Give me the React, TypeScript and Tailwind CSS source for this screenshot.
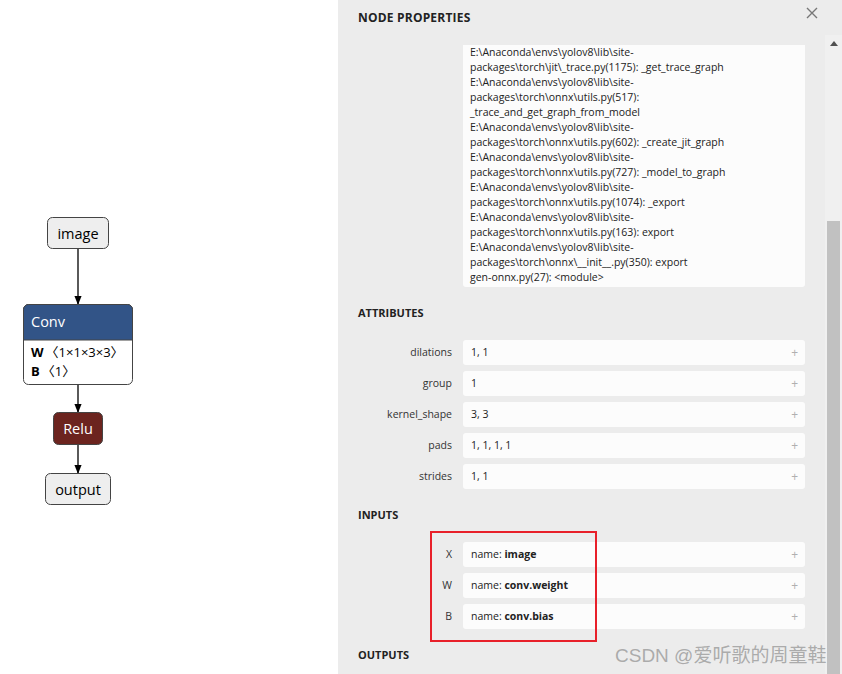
import React from "react";

const traceLines = [
  "E:\\Anaconda\\envs\\yolov8\\lib\\site-",
  "packages\\torch\\jit\\_trace.py(1175): _get_trace_graph",
  "E:\\Anaconda\\envs\\yolov8\\lib\\site-",
  "packages\\torch\\onnx\\utils.py(517):",
  "_trace_and_get_graph_from_model",
  "E:\\Anaconda\\envs\\yolov8\\lib\\site-",
  "packages\\torch\\onnx\\utils.py(602): _create_jit_graph",
  "E:\\Anaconda\\envs\\yolov8\\lib\\site-",
  "packages\\torch\\onnx\\utils.py(727): _model_to_graph",
  "E:\\Anaconda\\envs\\yolov8\\lib\\site-",
  "packages\\torch\\onnx\\utils.py(1074): _export",
  "E:\\Anaconda\\envs\\yolov8\\lib\\site-",
  "packages\\torch\\onnx\\utils.py(163): export",
  "E:\\Anaconda\\envs\\yolov8\\lib\\site-",
  "packages\\torch\\onnx\\__init__.py(350): export",
  "gen-onnx.py(27): <module>",
];

const attributes = [
  { name: "dilations", value: "1, 1" },
  { name: "group", value: "1" },
  { name: "kernel_shape", value: "3, 3" },
  { name: "pads", value: "1, 1, 1, 1" },
  { name: "strides", value: "1, 1" },
];

const inputs = [
  { name: "X", value: "image" },
  { name: "W", value: "conv.weight" },
  { name: "B", value: "conv.bias" },
];

function Graph() {
  return (
    <svg width="338" height="674" viewBox="0 0 338 674" className="block">
      <defs>
        <marker id="arrow" viewBox="0 0 10 10" refX="9" refY="5" markerWidth="7" markerHeight="7" orient="auto">
          <path d="M0,1 L10,5 L0,9 z" fill="#000" />
        </marker>
      </defs>
      <g stroke="#000" strokeWidth="1.3" markerEnd="url(#arrow)">
        <line x1="78" y1="249" x2="78" y2="304" />
        <line x1="78" y1="385" x2="78" y2="412" />
        <line x1="78" y1="445" x2="78" y2="473" />
      </g>
      <g fontFamily="'Open Sans', 'Noto Sans', 'Noto Sans CJK SC', sans-serif" fontSize="14.5">
        <rect x="47.5" y="217.5" width="61" height="31" rx="5" fill="#eeeeee" stroke="#444" />
        <text x="78" y="239" textAnchor="middle" fill="#000">image</text>

        <rect x="23.5" y="304.5" width="109" height="80" rx="5" fill="#fff" stroke="#444" />
        <path d="M23.5,340 V309.5 a5,5 0 0 1 5,-5 H127.5 a5,5 0 0 1 5,5 V340 z" fill="#325487" stroke="#444" />
        <text x="31" y="327" fill="#fff">Conv</text>
        <text x="31" y="357" fontSize="13" fill="#000">
          <tspan fontWeight="bold">W</tspan>
          <tspan dx="2">〈1×1×3×3〉</tspan>
        </text>
        <text x="31" y="376" fontSize="13" fill="#000">
          <tspan fontWeight="bold">B</tspan>
          <tspan dx="2">〈1〉</tspan>
        </text>

        <rect x="53.5" y="412.5" width="49" height="32" rx="5" fill="#6c241f" stroke="#444" />
        <text x="78" y="434" textAnchor="middle" fill="#fff">Relu</text>

        <rect x="45.5" y="473.5" width="65" height="31" rx="5" fill="#eeeeee" stroke="#444" />
        <text x="78" y="495" textAnchor="middle" fill="#000">output</text>
      </g>
    </svg>
  );
}

function Plus() {
  return <span className="text-[12px] leading-none text-[#b0b0b0]">+</span>;
}

function Row({ label, children }: { label: string; children: React.ReactNode }) {
  return (
    <div className="flex items-center">
      <div className="w-[95px] pr-[1px] text-right text-[10.5px] text-[#333]">{label}</div>
      <div className="ml-[10px] flex h-[25px] flex-1 items-center justify-between rounded-[3px] bg-[#fcfcfc] pl-[8px] pr-[7px] text-[10.5px] text-[#222]">
        <span>{children}</span>
        <Plus />
      </div>
    </div>
  );
}

function SectionTitle({ children }: { children: React.ReactNode }) {
  return (
    <div className="mt-[18px] mb-[19px] h-[16px] text-[11px] leading-[16px] font-bold text-[#222]">{children}</div>
  );
}

export default function App() {
  return (
    <div
      className="flex h-[674px] w-[842px] overflow-hidden bg-white"
      style={{ fontFamily: "'Open Sans', 'Noto Sans', sans-serif" }}
    >
      <div className="w-[338px] shrink-0">
        <Graph />
      </div>

      <div className="relative flex w-[504px] flex-col bg-[#ececec]">
        <div className="flex h-[35px] shrink-0 items-center justify-between pl-[20px] pr-[24px]">
          <span className="text-[12px] font-bold tracking-[0.2px] text-[#222]">NODE PROPERTIES</span>
          <svg width="12" height="12" viewBox="0 0 12 12" className="-mt-[10px]">
            <path d="M1 1 L11 11 M11 1 L1 11" stroke="#777" strokeWidth="1.4" />
          </svg>
        </div>

        <div className="flex min-h-0 flex-1">
          <div className="flex-1 overflow-hidden pl-[20px] pr-[20px] pt-[10px]">
            <div className="flex">
              <div className="w-[95px]" />
              <div className="ml-[10px] h-[242px] flex-1 overflow-hidden rounded-b-[3px] bg-[#fcfcfc] pl-[7px]">
                <div className="text-[10.5px] leading-[15px] text-[#222]">
                  {traceLines.map((l, i) => (
                    <div key={i} className="whitespace-nowrap">{l}</div>
                  ))}
                </div>
              </div>
            </div>

            <SectionTitle>ATTRIBUTES</SectionTitle>
            <div className="flex flex-col gap-[6px]">
              {attributes.map((a) => (
                <Row key={a.name} label={a.name}>{a.value}</Row>
              ))}
            </div>

            <SectionTitle>INPUTS</SectionTitle>
            <div className="flex flex-col gap-[6px]">
              {inputs.map((a) => (
                <Row key={a.name} label={a.name}>
                  name: <span className="font-bold">{a.value}</span>
                </Row>
              ))}
            </div>

            <SectionTitle>OUTPUTS</SectionTitle>
          </div>

          <div className="flex w-[17px] shrink-0 flex-col bg-[#f0f0f0]">
            <div className="flex h-[17px] items-center justify-center">
              <svg width="8" height="5" viewBox="0 0 8 5">
                <path d="M0 5 L4 0 L8 5 z" fill="#505050" />
              </svg>
            </div>
            <div className="mx-[2px] mt-[169px] flex-1 bg-[#c1c1c1]" />
          </div>
        </div>

        <div className="pointer-events-none absolute left-[92px] top-[531px] h-[111px] w-[167px] border-2 border-[#e8202a]" />

        <div
          className="pointer-events-none absolute left-[277px] top-[643px] text-[19px] leading-[26px] text-[#9a9a9a]/80"
          style={{ fontFamily: "'Liberation Sans', 'Noto Sans CJK SC', sans-serif" }}
        >
          CSDN @爱听歌的周童鞋
        </div>
      </div>
    </div>
  );
}
